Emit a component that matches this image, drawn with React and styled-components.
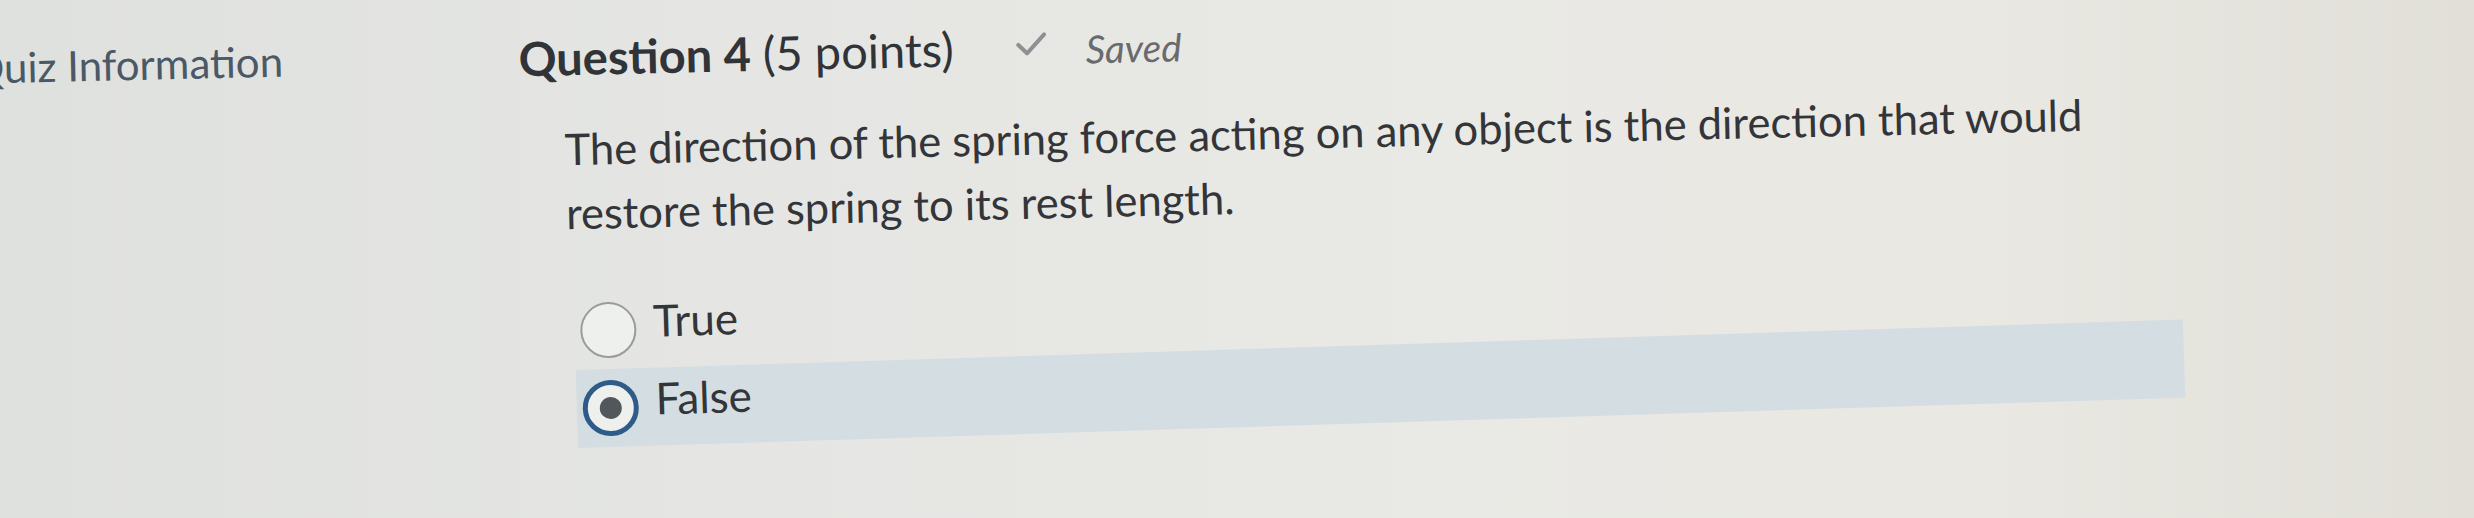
import React from "react";
import styled, { createGlobalStyle } from "styled-components";

const Global = createGlobalStyle`
  html, body {
    margin: 0;
    padding: 0;
    height: 100%;
  }
  body {
    width: 2474px;
    height: 518px;
    overflow: hidden;
    font-family: Lato, "Open Sans", "Noto Sans", sans-serif;
    background: linear-gradient(90deg, #dfe1de 0%, #e5e6e3 30%, #e9e9e5 60%, #e9e8e2 80%, #e1dfd8 100%);
  }
`;

const Page = styled.div`
  display: flex;
  align-items: flex-start;
  transform: rotate(-1.3deg);
  transform-origin: 580px 300px;
`;

const Sidebar = styled.aside`
  width: 524px;
  flex: none;
  padding-top: 29px;
`;

const NavLink = styled.a`
  display: block;
  margin-left: -24px;
  font-size: 42px;
  line-height: 50px;
  color: #4b5967;
  text-decoration: none;
  white-space: nowrap;
`;

const Main = styled.main`
  flex: none;
  padding-top: 29px;
`;

const Header = styled.div`
  display: flex;
  align-items: baseline;
`;

const Title = styled.h2`
  margin: 0;
  font-size: 47px;
  line-height: 56px;
  font-weight: 400;
  color: #303337;
  white-space: nowrap;

  b {
    font-weight: 700;
  }
`;

const Status = styled.span`
  display: inline-flex;
  align-items: baseline;
  gap: 38px;
  margin-left: 62px;
  font-size: 38.5px;
  font-style: italic;
  color: #686a6e;
`;

const CheckMark = styled.svg`
  width: 32px;
  height: 26px;
  align-self: center;
  position: relative;
  top: -6px;
`;

const Prompt = styled.p`
  margin: 31px 0 0 44px;
  width: 1600px;
  font-size: 43.5px;
  line-height: 64px;
  color: #333539;
`;

const Options = styled.div`
  margin: 48px 0 0 50px;
  width: 1608px;
  display: flex;
  flex-direction: column;
  transform: rotate(-0.5deg);
  transform-origin: 0 50%;
`;

const Option = styled.label`
  display: flex;
  align-items: center;
  gap: 17px;
  height: 78px;
  padding-left: 6px;
  background: ${(p) => (p.$selected ? "#d4dee2" : "transparent")};
  cursor: pointer;
`;

const Radio = styled.span`
  box-sizing: border-box;
  width: 56px;
  height: 56px;
  flex: none;
  border-radius: 50%;
  display: flex;
  align-items: center;
  justify-content: center;
  background: #eef0ee;
  border: ${(p) => (p.$checked ? "5px solid #2f5b88" : "2px solid #9a9b9d")};

  &::after {
    content: "";
    display: ${(p) => (p.$checked ? "block" : "none")};
    width: 22px;
    height: 22px;
    border-radius: 50%;
    background: #52575b;
  }
`;

const OptionText = styled.span`
  font-size: 44px;
  line-height: 52px;
  margin-bottom: 19px;
  color: #333539;
`;

const choices = [
  { label: "True", selected: false },
  { label: "False", selected: true },
];

export default function App() {
  return (
    <>
      <Global />
      <Page>
        <Sidebar>
          <NavLink href="#">Quiz Information</NavLink>
        </Sidebar>
        <Main>
          <Header>
            <Title>
              <b>Question 4</b> (5 points)
            </Title>
            <Status>
              <CheckMark viewBox="0 0 32 26" fill="none">
                <path
                  d="M3 14 L11.5 22.5 L29 4"
                  stroke="#8e9093"
                  strokeWidth="4"
                  strokeLinecap="round"
                  strokeLinejoin="round"
                />
              </CheckMark>
              Saved
            </Status>
          </Header>
          <Prompt>
            The direction of the spring force acting on any object is the direction that would
            restore the spring to its rest length.
          </Prompt>
          <Options>
            {choices.map((c) => (
              <Option key={c.label} $selected={c.selected}>
                <Radio $checked={c.selected} />
                <OptionText>{c.label}</OptionText>
              </Option>
            ))}
          </Options>
        </Main>
      </Page>
    </>
  );
}
